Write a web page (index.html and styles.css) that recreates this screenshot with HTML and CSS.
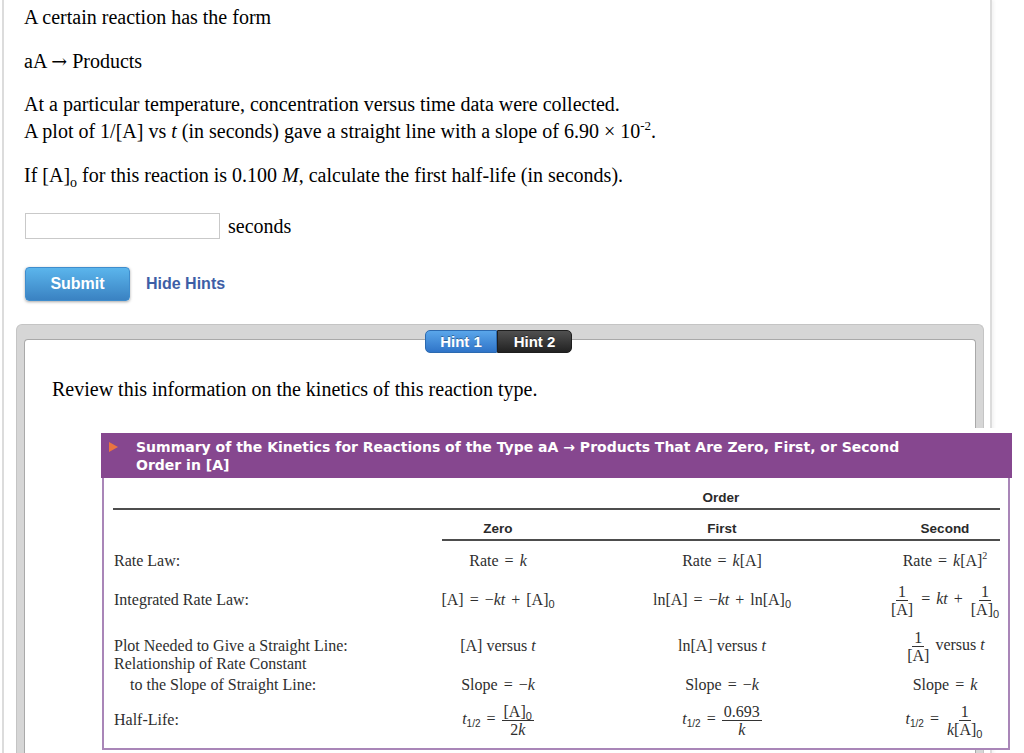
FILE: index.html
```html
<!DOCTYPE html>
<html lang="en">
<head>
<meta charset="utf-8">
<title>Kinetics problem</title>
<link rel="stylesheet" href="styles.css">
</head>
<body>
<div class="page">
  <div class="question">
    <p>A certain reaction has the form</p>
    <p>aA <span class="arrow">→</span> Products</p>
    <p>At a particular temperature, concentration versus time data were collected.<br>A plot of 1/[A] vs <i>t</i> (in seconds) gave a straight line with a slope of 6.90 × 10<sup>-2</sup>.</p>
    <p>If [A]<sub>o</sub> for this reaction is 0.100 <i>M</i>, calculate the first half-life (in seconds).</p>
    <div class="answer-row"><input class="answer" type="text" aria-label="answer"><span>seconds</span></div>
    <div class="actions"><button class="submit" type="button">Submit</button><a class="hide-hints" href="#">Hide Hints</a></div>
  </div>

  <div class="hint-panel">
    <div class="tabs"><span class="tab tab-active">Hint 1</span><span class="tab tab-dark">Hint 2</span></div>
    <div class="hint-body">
      <p class="hint-text">Review this information on the kinetics of this reaction type.</p>
      <div class="figure">
        <div class="fig-head">
          <span class="tri"></span>
          <div class="fig-title">Summary of the Kinetics for Reactions of the Type aA → Products That Are Zero, First, or Second<br>Order in [A]</div>
        </div>
        <div class="fig-table">
          <div class="order-row"><span></span><span class="order">Order</span></div>
          <div class="cols head-row">
            <span class="blank"></span><span class="th">Zero</span><span class="th">First</span><span class="th">Second</span>
          </div>
          <div class="cols data">
            <span class="lbl">Rate Law:</span>
            <span class="val"><span>Rate<span class="op">=</span><i>k</i></span></span>
            <span class="val"><span>Rate<span class="op">=</span><i>k</i>[A]</span></span>
            <span class="val"><span>Rate<span class="op">=</span><i>k</i>[A]<sup class="sq">2</sup></span></span>

            <span class="lbl">Integrated Rate Law:</span>
            <span class="val"><span>[A]<span class="op">=</span>−<i>kt</i><span class="op">+</span>[A]<sub class="z">0</sub></span></span>
            <span class="val"><span>ln[A]<span class="op">=</span>−<i>kt</i><span class="op">+</span>ln[A]<sub class="z">0</sub></span></span>
            <span class="val"><span><span class="frac"><span class="num">1</span><span class="den">[A]</span></span><span class="op">=</span><i>kt</i><span class="op">+</span><span class="frac"><span class="num">1</span><span class="den">[A]<sub class="z">0</sub></span></span></span></span>

            <span class="lbl lbl-top">Plot Needed to Give a Straight Line:<br>Relationship of Rate Constant</span>
            <span class="val"><span>[A] versus <i>t</i></span></span>
            <span class="val"><span>ln[A] versus <i>t</i></span></span>
            <span class="val"><span><span class="frac"><span class="num">1</span><span class="den">[A]</span></span> versus <i>t</i></span></span>

            <span class="lbl lbl-indent">to the Slope of Straight Line:</span>
            <span class="val"><span>Slope<span class="op">=</span>−<i>k</i></span></span>
            <span class="val"><span>Slope<span class="op">=</span>−<i>k</i></span></span>
            <span class="val"><span>Slope<span class="op">=</span><i>k</i></span></span>

            <span class="lbl">Half-Life:</span>
            <span class="val"><span><i>t</i><sub class="half">1/2</sub><span class="op">=</span><span class="frac"><span class="num">[A]<sub class="z">0</sub></span><span class="den">2<i>k</i></span></span></span></span>
            <span class="val"><span><i>t</i><sub class="half">1/2</sub><span class="op">=</span><span class="frac"><span class="num">0.693</span><span class="den"><i>k</i></span></span></span></span>
            <span class="val"><span><i>t</i><sub class="half">1/2</sub><span class="op">=</span><span class="frac"><span class="num">1</span><span class="den"><i>k</i>[A]<sub class="z">0</sub></span></span></span></span>
          </div>
        </div>
      </div>
    </div>
  </div>
</div>
</body>
</html>
```

FILE: styles.css
```css
html, body {
  margin: 0;
  padding: 0;
  background: #ffffff;
  overflow: hidden;
}

body {
  font-family: "Liberation Serif", "Times New Roman", serif;
  color: #000;
}

.page {
  box-sizing: border-box;
  width: 990px;
  min-height: 753px;
  margin-left: 2px;
  padding: 4px 6px 0 12px;
  border-left: 2px solid #dcdcdc;
  border-right: 2px solid #dcdcdc;
  box-shadow: 2px 0 3px rgba(0, 0, 0, 0.05);
}

.question {
  padding-left: 8px;
}

.question p {
  margin: 0 0 16.5px;
  font-size: 20px;
  line-height: 27px;
}

.arrow {
  font-family: "DejaVu Serif", serif;
  font-size: 19px;
  line-height: 0;
}

.question sup {
  font-size: 13px;
  line-height: 0;
  vertical-align: 8px;
}

.question sub {
  font-size: 14px;
  line-height: 0;
  vertical-align: -5px;
}

.answer-row {
  margin-top: 24.5px;
  display: flex;
  align-items: center;
  gap: 8px;
  font-size: 20px;
}

.answer {
  box-sizing: border-box;
  width: 195px;
  height: 26px;
  margin: 0 0 0 1px;
  border: 1px solid #c9c9c9;
  padding: 0 4px;
  background: #fff;
}

.actions {
  margin-top: 28px;
  display: flex;
  align-items: center;
  gap: 16px;
}

.submit {
  box-sizing: border-box;
  width: 105px;
  height: 34px;
  margin-left: 1px;
  border: 1px solid #3f8dcd;
  border-radius: 4px;
  background: linear-gradient(#5bb5ec, #3a82c2);
  box-shadow: 0 1px 3px rgba(0, 0, 0, 0.35);
  color: #fff;
  font: bold 16px "Liberation Sans", Arial, sans-serif;
  padding: 0;
}

.hide-hints {
  color: #3d5ea6;
  font: bold 16px "Liberation Sans", Arial, sans-serif;
  text-decoration: none;
}

.hint-panel {
  position: relative;
  margin-top: 23px;
  border: 1px solid #c4c4c4;
  border-bottom: none;
  border-radius: 6px 6px 0 0;
  background: #d6d6d6;
  padding: 14px 7px 0 7px;
}

.tabs {
  position: absolute;
  top: 5px;
  left: 408px;
  display: flex;
}

.tab {
  box-sizing: border-box;
  height: 23px;
  text-align: center;
  color: #fff;
  font: bold 15px/21px "Liberation Sans", Arial, sans-serif;
  text-shadow: 0 -1px 0 rgba(0, 0, 0, 0.35);
}

.tab-active {
  width: 72px;
  border: 1px solid #2c6ab0;
  border-radius: 5px 0 0 5px;
  background: linear-gradient(#5aa6ea, #2f74c8);
}

.tab-dark {
  width: 75px;
  border: 1px solid #1e1e1e;
  border-radius: 0 5px 5px 0;
  background: linear-gradient(#505050, #222222);
}

.hint-body {
  border: 1px solid #a9a9a9;
  border-bottom: none;
  border-radius: 4px 4px 0 0;
  background: #fff;
  padding: 36px 0 30px 27px;
  min-height: 420px;
}

.hint-text {
  margin: 0;
  font-size: 20px;
  line-height: 27px;
}

.figure {
  box-sizing: border-box;
  width: 927px;
  margin: 25px 0 0 45px;
  padding: 5px 12px 0 4px;
  background: #fff;
}

.fig-head {
  display: flex;
  align-items: flex-start;
  height: 45px;
  box-sizing: border-box;
  padding: 5px 0 4px 8px;
  background: #86478f;
}

.tri {
  width: 0;
  height: 0;
  margin-top: 4px;
  margin-right: 18px;
  border-left: 9px solid #ea7440;
  border-top: 5px solid transparent;
  border-bottom: 5px solid transparent;
}

.fig-title {
  color: #fff;
  font: bold 14px/18px "DejaVu Sans", Verdana, sans-serif;
  white-space: nowrap;
}

.fig-table {
  margin: 0 2px 0 1px;
  border: 2px solid #a986b8;
  border-top: none;
  padding: 0 8px 5px 9px;
  color: #2e2e2e;
}

.order-row {
  display: grid;
  grid-template-columns: 329px 558px;
  box-sizing: border-box;
  height: 32px;
  padding-top: 10px;
  border-bottom: 2px solid #4d4d4d;
}

.order, .th {
  text-align: center;
  font: bold 13.5px/20px "Liberation Sans", Arial, sans-serif;
  color: #2a2a2a;
}

.cols {
  display: grid;
  grid-template-columns: 329px 112px 336px 110px;
}

.head-row .th, .head-row .blank {
  box-sizing: border-box;
  height: 31px;
  padding-top: 9px;
}

.head-row .th {
  border-bottom: 2px solid #4d4d4d;
}

.data {
  grid-template-rows: 40px 38px 54px 24px 46px;
  font-size: 16px;
  line-height: 20px;
}

.lbl {
  align-self: center;
  padding-left: 1px;
  white-space: nowrap;
}

.lbl-top {
  align-self: start;
  padding-top: 18px;
  line-height: 18px;
}

.lbl-indent {
  padding-left: 17px;
}

.val {
  display: flex;
  justify-content: center;
  align-items: center;
  white-space: nowrap;
}

.op {
  margin: 0 6px;
}

.frac {
  display: inline-flex;
  flex-direction: column;
  align-items: center;
  vertical-align: middle;
  line-height: 17px;
}

.num {
  padding: 0 2px;
  border-bottom: 1px solid #333;
}

.den {
  padding: 0 2px;
}

.z {
  font: 11px "Liberation Sans", Arial, sans-serif;
  line-height: 0;
  vertical-align: -3px;
}

.half {
  font: 10px "Liberation Sans", Arial, sans-serif;
  line-height: 0;
  vertical-align: -3px;
}

.sq {
  font-size: 10px;
  line-height: 0;
  vertical-align: 7px;
}
```
